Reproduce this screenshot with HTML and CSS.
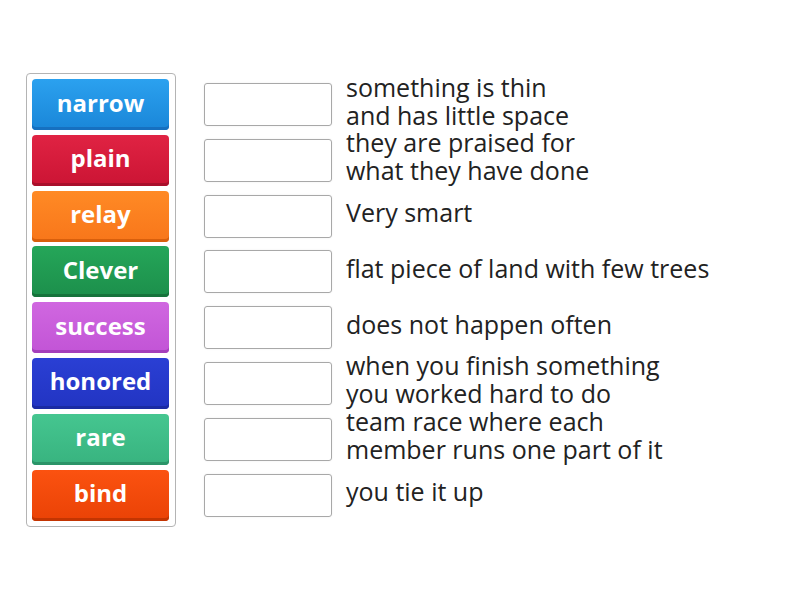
FILE: index.html
```html
<!DOCTYPE html>
<html>
<head>
<meta charset="utf-8">
<link rel="stylesheet" href="styles.css">
</head>
<body>
<div class="page">
  <div class="bank">
    <div class="tile t-blue">narrow</div>
    <div class="tile t-red">plain</div>
    <div class="tile t-orange">relay</div>
    <div class="tile t-green">Clever</div>
    <div class="tile t-purple">success</div>
    <div class="tile t-indigo">honored</div>
    <div class="tile t-mint">rare</div>
    <div class="tile t-fire">bind</div>
  </div>
  <div class="rows">
    <div class="row"><div class="slot"></div><div class="def">something is thin<br>and has little space</div></div>
    <div class="row"><div class="slot"></div><div class="def">they are praised for<br>what they have done</div></div>
    <div class="row"><div class="slot"></div><div class="def">Very smart</div></div>
    <div class="row"><div class="slot"></div><div class="def">flat piece of land with few trees</div></div>
    <div class="row"><div class="slot"></div><div class="def">does not happen often</div></div>
    <div class="row"><div class="slot"></div><div class="def">when you finish something<br>you worked hard to do</div></div>
    <div class="row"><div class="slot"></div><div class="def">team race where each<br>member runs one part of it</div></div>
    <div class="row"><div class="slot"></div><div class="def">you tie it up</div></div>
  </div>
</div>
</body>
</html>
```

FILE: styles.css
```css
html, body {
  margin: 0;
  padding: 0;
  background: #ffffff;
}
body {
  font-family: "Open Sans", "Liberation Sans", sans-serif;
  width: 800px;
  height: 600px;
  overflow: hidden;
}
.page {
  display: flex;
  align-items: flex-start;
  padding: 73px 0 0 26px;
}
.bank {
  width: 137px;
  border: 1px solid #b4b4b4;
  border-radius: 4px;
  padding: 5px 6px 5px 5px;
  display: flex;
  flex-direction: column;
  gap: 4.8px;
}
.tile {
  height: 51px;
  border-radius: 4px;
  color: #ffffff;
  font-weight: 700;
  font-size: 24px;
  display: flex;
  align-items: center;
  justify-content: center;
  padding-bottom: 5px;
  box-sizing: border-box;
}
.t-blue   { background: linear-gradient(#2ba1ef, #1a86d8); box-shadow: inset 0 -3px 0 #1670c0; }
.t-red    { background: linear-gradient(#e02343, #cb1434); box-shadow: inset 0 -3px 0 #a90f2b; }
.t-orange { background: linear-gradient(#ff8a25, #f8761a); box-shadow: inset 0 -3px 0 #d85f0c; }
.t-green  { background: linear-gradient(#25a659, #1c8f4b); box-shadow: inset 0 -3px 0 #16733b; }
.t-purple { background: linear-gradient(#d067e0, #c254d6); box-shadow: inset 0 -3px 0 #a43fbb; }
.t-indigo { background: linear-gradient(#2a3fd4, #2234c2); box-shadow: inset 0 -3px 0 #1b2aa3; }
.t-mint   { background: linear-gradient(#45c690, #38b37f); box-shadow: inset 0 -3px 0 #2b9468; }
.t-fire   { background: linear-gradient(#fb5210, #ea4206); box-shadow: inset 0 -3px 0 #c33502; }
.rows {
  margin-left: 28px;
  padding-top: 6px;
  display: flex;
  flex-direction: column;
  gap: 4.8px;
}
.row {
  height: 51px;
  display: flex;
  align-items: center;
}
.slot {
  width: 126px;
  height: 41px;
  border: 1px solid #a8a8a8;
  border-radius: 3px;
  box-shadow: 0 0 2px rgba(0,0,0,0.08);
  flex: none;
}
.def {
  margin-left: 14px;
  font-size: 25px;
  line-height: 28px;
  color: #222222;
  white-space: nowrap;
  margin-bottom: 8px;
}
```
